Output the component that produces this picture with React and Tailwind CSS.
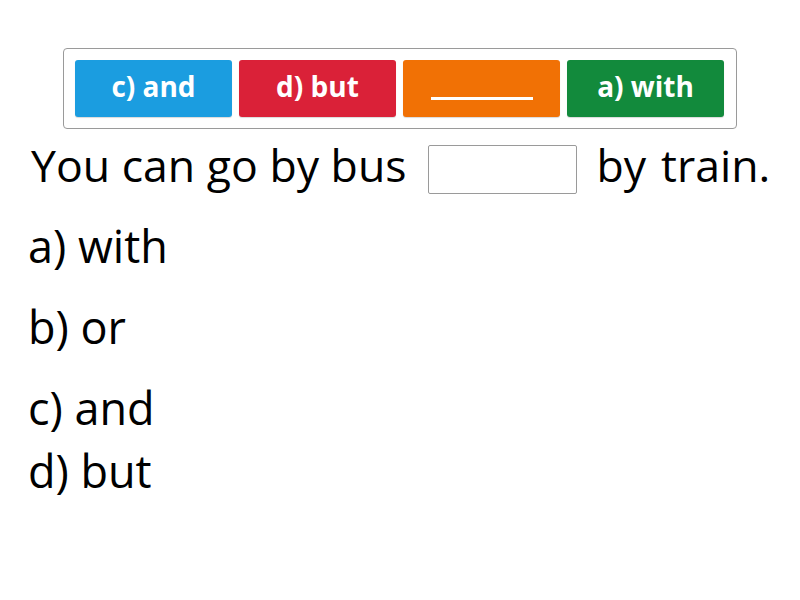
const tiles = [
  { label: 'c) and', color: 'bg-[#1b9de0]' },
  { label: 'd) but', color: 'bg-[#da2138]' },
  { label: null, color: 'bg-[#f17105]' },
  { label: 'a) with', color: 'bg-[#128a3c]' },
]

const options = [
  { text: 'a) with', gap: 'mb-[21px]' },
  { text: 'b) or', gap: 'mb-[21px]' },
  { text: 'c) and', gap: 'mb-[3px]' },
  { text: 'd) but', gap: '' },
]

export default function App() {
  return (
    <div className="w-[800px] h-[600px] bg-white text-black overflow-hidden font-['Open_Sans',sans-serif]">
      <div className="ml-[63px] mt-[48px] w-[674px] rounded border border-[#9a9a9a] p-[11px] flex gap-[7px]">
        {tiles.map((t, i) => (
          <div
            key={i}
            className={`${t.color} w-[157px] h-[57px] pb-[6px] rounded-[3px] flex items-center justify-center text-white text-[28px] font-bold shadow-[0_1px_1px_rgba(0,0,0,0.15)]`}
          >
            {t.label ? t.label : <span className="block w-[102px] h-[3px] bg-white mt-[26px]" />}
          </div>
        ))}
      </div>

      <div className="mt-[6px] ml-[31px] flex items-start h-[60px] text-[44.6px] leading-[60px]">
        <span>You can go by bus</span>
        <span className="ml-[22px] mt-[10px] w-[149px] h-[49px] border border-[#9a9a9a] rounded-[2px] bg-white" />
        <span className="ml-[19px]">by</span>
        <span className="ml-[15px]">train.</span>
      </div>

      <div className="mt-[21px] ml-[28px] text-[45px] leading-[60px]">
        {options.map((o) => (
          <div key={o.text} className={o.gap}>{o.text}</div>
        ))}
      </div>
    </div>
  )
}
